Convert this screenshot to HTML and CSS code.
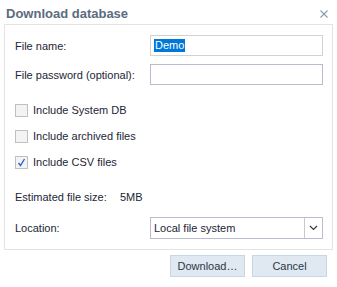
FILE: index.html
```html
<!DOCTYPE html>
<html lang="en">
<head>
    <meta charset="UTF-8">
    <title>Download database</title>
    <link rel="stylesheet" href="styles.css">
</head>
<body>

    <div class="dialog">
        <div class="header">
            <span class="title">Download database</span>
            <svg class="close" width="8" height="8" viewBox="0 0 8 8"><path d="M0.5 0.5 L7.5 7.5 M7.5 0.5 L0.5 7.5" stroke="#8c9aab" stroke-width="1.1"/></svg>
        </div>

        <div class="panel">
            <div class="row">
                <span class="label">File name:</span>
                <div class="field"><span class="selected">Demo</span></div>
            </div>
            <div class="row">
                <span class="label">File password (optional):</span>
                <div class="field password"></div>
            </div>

            <div class="checks">
                <div class="check"><span class="box"></span>Include System DB</div>
                <div class="check"><span class="box"></span>Include archived files</div>
                <div class="check">
                    <span class="box">
                        <svg width="9" height="9" viewBox="0 0 9 9"><path d="M1.5 5 L3.5 7.5 L7.5 1" fill="none" stroke="#2d63d0" stroke-width="1.4"/></svg>
                    </span>Include CSV files
                </div>
            </div>

            <div class="size">
                <span class="size-label">Estimated file size:</span>
                <span>5MB</span>
            </div>

            <div class="row location">
                <span class="label">Location:</span>
                <div class="field select">
                    <span class="value">Local file system</span>
                    <span class="arrow">
                        <svg width="9" height="6" viewBox="0 0 9 6"><path d="M1 1 L4.5 4.5 L8 1" fill="none" stroke="#333" stroke-width="1.1"/></svg>
                    </span>
                </div>
            </div>
        </div>

        <div class="footer">
            <button class="btn">Download&hellip;</button>
            <button class="btn">Cancel</button>
        </div>
    </div>

</body>
</html>
```

FILE: styles.css
```css
body {
    margin: 0;
    background: #fff;
    font-family: Tahoma, "Liberation Sans", sans-serif;
    font-size: 11px;
    color: #1b2636;
}

.dialog {
    width: 337px;
    height: 287px;
    display: flex;
    flex-direction: column;
}

.header {
    height: 24px;
    display: flex;
    align-items: center;
    justify-content: space-between;
    padding: 0 9px 0 6px;
}

.title {
    font-weight: bold;
    font-size: 13px;
    color: #5b6b7e;
    padding-top: 3px;
}

.close {
    margin-top: 4px;
}

.panel {
    margin: 0 4px;
    height: 226px;
    border: 1px solid #e3e3e3;
    padding: 10px 9px 0 10px;
    box-sizing: border-box;
}

.row {
    display: flex;
    align-items: center;
    margin-bottom: 8px;
}

.label {
    width: 135px;
}

.field {
    width: 173px;
    height: 21px;
    box-sizing: border-box;
    border: 1px solid #d2d2d2;
    display: flex;
    align-items: center;
    padding-left: 3px;
}

.field.password {
    border-color: #b9bccd;
}

.selected {
    background: #0078d7;
    color: #fff;
    padding: 1px 1px 1px;
    line-height: 11px;
}

.checks {
    margin-top: 18px;
}

.check {
    display: flex;
    align-items: center;
    height: 14px;
    margin: 11px 0 12px;
}

.box {
    width: 11px;
    height: 11px;
    border: 1px solid #c0c0c0;
    background: #f3f3f3;
    margin-right: 5px;
    display: flex;
    align-items: center;
    justify-content: center;
}

.size {
    display: flex;
    margin: 22px 0 14px;
}

.size-label {
    width: 105px;
}

.location .field {
    border-color: #b9bccd;
    justify-content: space-between;
    padding: 0;
    height: 22px;
}

.value {
    padding-left: 3px;
}

.arrow {
    width: 17px;
    height: 20px;
    border-left: 1px solid #c8c8c8;
    display: flex;
    align-items: center;
    justify-content: center;
}

.footer {
    display: flex;
    justify-content: flex-end;
    gap: 7px;
    padding: 5px 10px 0 0;
}

.btn {
    width: 75px;
    height: 22px;
    background: #e0e8f1;
    border: 1px solid #c9d6e5;
    font-family: inherit;
    font-size: 11px;
    color: #2b3746;
    padding: 0;
}
```
